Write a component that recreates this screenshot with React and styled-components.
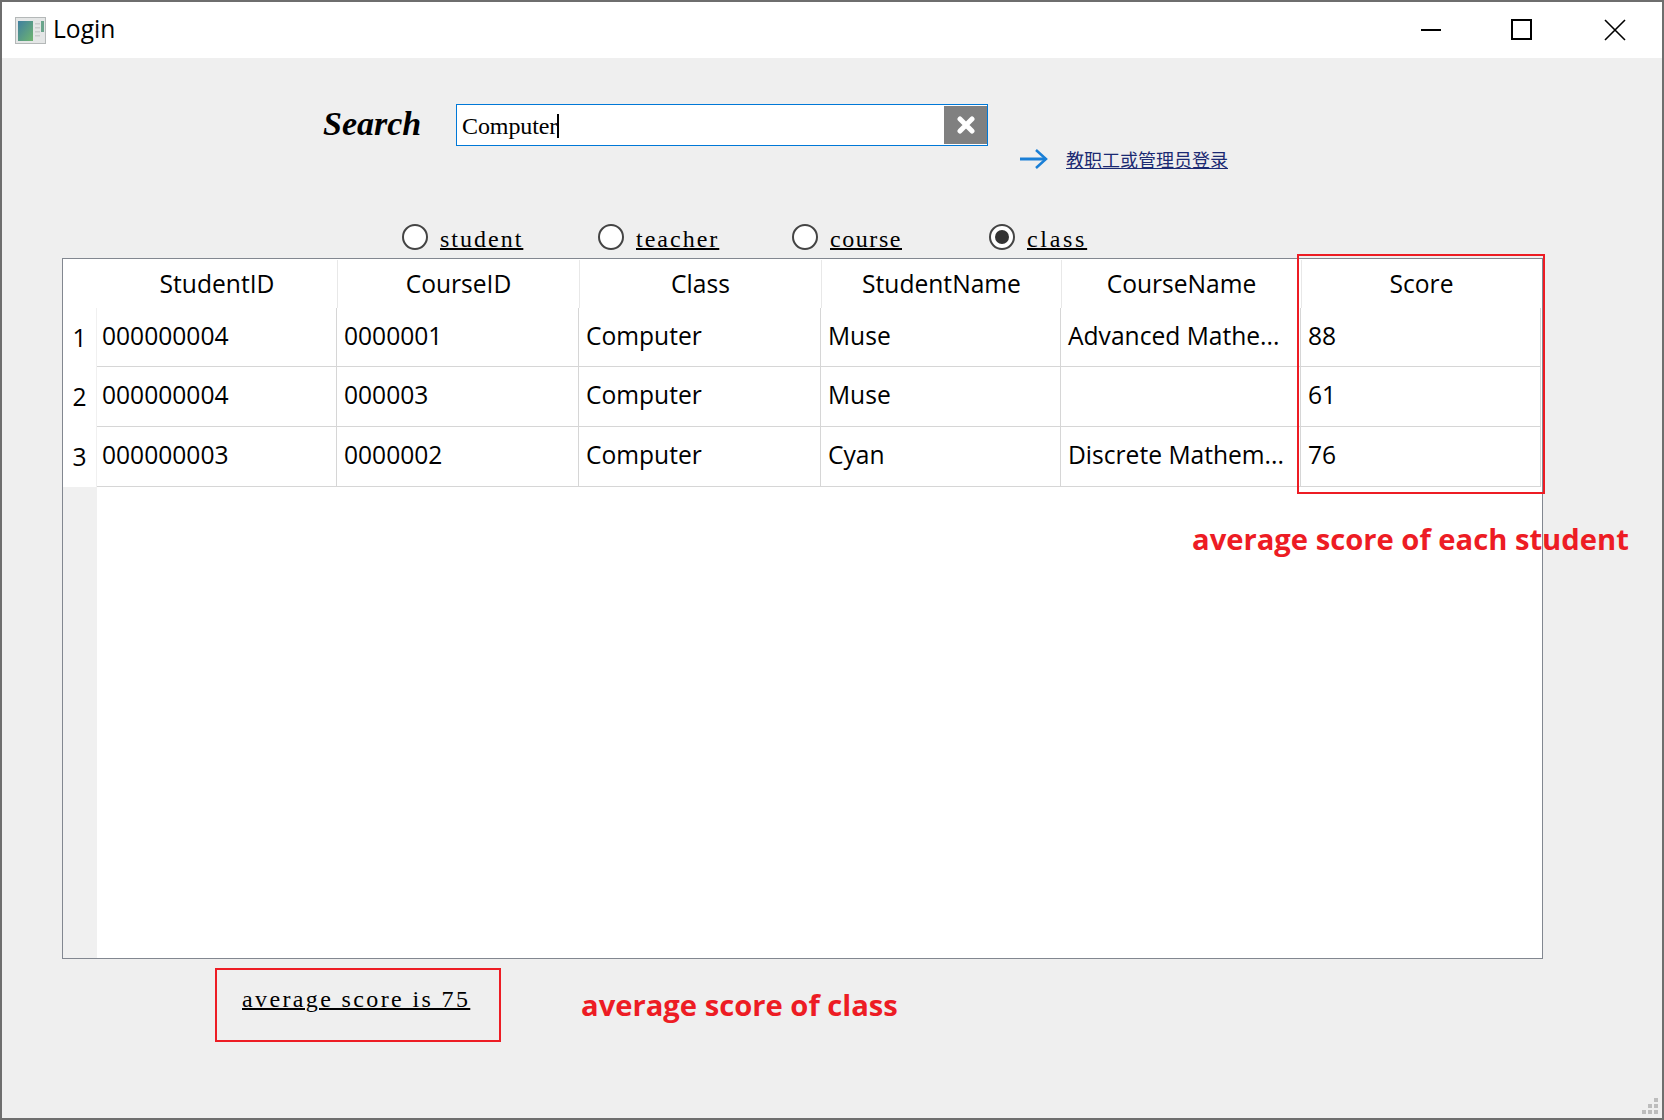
import React from "react"
import styled, { createGlobalStyle } from "styled-components"

const GlobalStyle = createGlobalStyle`
  html, body {
    margin: 0;
    padding: 0;
    background: #efefef;
  }
`

const Window = styled.div`
  position: relative;
  box-sizing: border-box;
  width: 1664px;
  height: 1120px;
  display: flex;
  flex-direction: column;
  overflow: hidden;
  border: 2px solid #6e6e6e;
  background: #efefef;
  font-family: "Open Sans", "Noto Sans", sans-serif;
  color: #000;
`

const TitleBar = styled.div`
  display: flex;
  align-items: center;
  flex: none;
  height: 56px;
  padding-left: 13px;
  background: #fff;
`

const AppIcon = styled.svg`
  width: 31px;
  height: 27px;
  flex: none;
  margin-right: 7px;
`

const Title = styled.span`
  flex: 1;
  padding-bottom: 4px;
  font-size: 24.6px;
`

const WindowButton = styled.svg`
  width: 22px;
  height: 22px;
  flex: none;
  margin-right: ${props => props.$gap}px;
`

const Content = styled.div`
  display: flex;
  flex-direction: column;
  flex: 1;
`

const SearchRow = styled.div`
  display: flex;
  align-items: flex-start;
  height: 166px;
  padding: 46px 0 0 321px;
  box-sizing: border-box;
`

const SearchLabel = styled.div`
  width: 133px;
  height: 40px;
  font-family: "Liberation Serif", serif;
  font-style: italic;
  font-weight: 700;
  font-size: 34px;
  line-height: 40px;
`

const SearchBox = styled.div`
  display: flex;
  box-sizing: border-box;
  width: 532px;
  height: 42px;
  border: 1px solid #0078d7;
  background: #fff;
`

const SearchText = styled.div`
  flex: 1;
  display: flex;
  align-items: center;
  padding: 2px 0 0 5px;
  font-family: "Liberation Serif", serif;
  font-size: 24px;
  letter-spacing: -0.1px;
`

const Caret = styled.span`
  width: 2px;
  height: 24px;
  background: #000;
`

const ClearButton = styled.div`
  display: flex;
  align-items: center;
  justify-content: center;
  align-self: flex-start;
  width: 43px;
  height: 38px;
  margin-top: 1px;
  background: #808080;
`

const StaffLink = styled.a`
  display: flex;
  align-items: center;
  gap: 18px;
  margin: 44px 0 0 32px;
  font-family: "Noto Sans CJK SC", sans-serif;
  font-size: 18px;
  line-height: 22px;
  color: #1b2a72;
  text-decoration: underline;
`

const RadioRow = styled.div`
  display: flex;
  height: 34px;
  padding-left: 400px;
`

const RadioItem = styled.label`
  display: flex;
  align-items: flex-start;
  gap: 12px;
  width: ${props => props.$width}px;
  font-family: "Liberation Serif", serif;
  font-size: 24px;
  line-height: 28px;
`

const RadioCircle = styled.span`
  display: flex;
  align-items: center;
  justify-content: center;
  box-sizing: border-box;
  width: 26px;
  height: 26px;
  border: 2px solid #444;
  border-radius: 50%;
  background: #fff;
`

const RadioDot = styled.span`
  width: 14px;
  height: 14px;
  border-radius: 50%;
  background: #333;
`

const RadioText = styled.span`
  padding-top: 1px;
  letter-spacing: ${props => props.$spacing}px;
  text-decoration: underline;
  text-decoration-thickness: 2px;
`

const Frame = styled.div`
  position: relative;
  box-sizing: border-box;
  display: flex;
  flex-direction: column;
  flex: none;
  width: 1481px;
  height: 701px;
  margin-left: 60px;
  border: 1px solid #828790;
  background: #fff;
`

const HeaderRow = styled.div`
  display: flex;
  flex: none;
  height: 49px;
  padding-left: 34px;
`

const HeaderCell = styled.div`
  box-sizing: border-box;
  width: ${props => props.$width}px;
  margin-top: 1px;
  padding-top: 1px;
  border-right: 1px solid ${props => (props.$last ? "transparent" : "#e8e8e8")};
  text-align: center;
  font-size: 24.6px;
  line-height: 46px;
`

const DataRow = styled.div`
  display: flex;
  flex: none;
  height: ${props => props.$height}px;
`

const RowNumber = styled.div`
  box-sizing: border-box;
  width: 34px;
  padding-bottom: 1px;
  border-right: 1px solid #f0f0f0;
  display: flex;
  align-items: center;
  justify-content: center;
  font-size: 24.6px;
`

const DataCell = styled.div`
  box-sizing: border-box;
  width: ${props => props.$width}px;
  padding: 0 6px 4px ${props => (props.$first ? 5 : 7)}px;
  display: flex;
  align-items: center;
  border-right: 1px solid #d6d6d6;
  border-bottom: 1px solid #d6d6d6;
  font-size: 24.6px;
  white-space: nowrap;
`

const EmptyArea = styled.div`
  display: flex;
  flex: 1;
`

const Gutter = styled.div`
  width: 34px;
  background: #f0f0f0;
`

const Highlight = styled.div`
  position: absolute;
  left: 1234px;
  top: -5px;
  box-sizing: border-box;
  width: 248px;
  height: 240px;
  border: 2px solid #ed1c24;
`

const Note = styled.span`
  font-size: 29.2px;
  font-weight: 700;
  color: #ed1c24;
  white-space: nowrap;
`

const StudentNote = styled(Note)`
  position: absolute;
  left: 1129px;
  top: 260px;
`

const Footer = styled.div`
  display: flex;
  align-items: center;
  gap: 80px;
  margin: 9px 0 0 213px;
`

const AverageBox = styled.div`
  box-sizing: border-box;
  width: 286px;
  height: 74px;
  padding: 15px 0 0 25px;
  border: 2px solid #ed1c24;
  font-family: "Liberation Serif", serif;
  font-size: 24px;
  line-height: 28px;
  letter-spacing: 2.37px;
  text-decoration: underline;
  text-decoration-thickness: 2px;
  white-space: pre;
`

const Grip = styled.svg`
  position: absolute;
  right: 4px;
  bottom: 4px;
  width: 16px;
  height: 16px;
`

const headerCols = [241, 242, 242, 240, 240, 240]
const cellCols = [240, 242, 242, 240, 240, 240]
const headers = ["StudentID", "CourseID", "Class", "StudentName", "CourseName", "Score"]
const rows = [
  ["000000004", "0000001", "Computer", "Muse", "Advanced Mathe...", "88"],
  ["000000004", "000003", "Computer", "Muse", "", "61"],
  ["000000003", "0000002", "Computer", "Cyan", "Discrete Mathem...", "76"],
]
const radios = [
  { label: "student", width: 196, spacing: 2 },
  { label: "teacher", width: 194, spacing: 2 },
  { label: "course", width: 197, spacing: 1.56 },
  { label: "class", width: 120, spacing: 2.7, checked: true },
]

const App = () => (
  <Window>
    <GlobalStyle />
    <TitleBar>
      <AppIcon viewBox="0 0 31 27">
        <defs>
          <linearGradient id="panel" x1="0" y1="0" x2="1" y2="1">
            <stop offset="0" stopColor="#3f7fa0" />
            <stop offset="1" stopColor="#6fb56f" />
          </linearGradient>
        </defs>
        <rect x="0.5" y="0.5" width="30" height="26" fill="#e4e6e6" stroke="#b4b8b8" />
        <rect x="3" y="4" width="15" height="20" fill="url(#panel)" />
        <rect x="20" y="6" width="5" height="1.5" fill="#c9cccc" />
        <rect x="20" y="10" width="5" height="1.5" fill="#c9cccc" />
        <rect x="20" y="14" width="5" height="1.5" fill="#c9cccc" />
        <rect x="20" y="18" width="5" height="1.5" fill="#c9cccc" />
        <rect x="26" y="4" width="3" height="11" fill="#6aa58c" />
      </AppIcon>
      <Title>Login</Title>
      <WindowButton viewBox="0 0 22 22" $gap={69}>
        <path d="M1 11h20" stroke="#000" strokeWidth="2" />
      </WindowButton>
      <WindowButton viewBox="0 0 22 22" $gap={71}>
        <rect x="1" y="1" width="19" height="19" fill="none" stroke="#000" strokeWidth="2" />
      </WindowButton>
      <WindowButton viewBox="0 0 22 22" $gap={36}>
        <path d="M1 1l20 20M21 1L1 21" stroke="#000" strokeWidth="1.6" />
      </WindowButton>
    </TitleBar>
    <Content>
      <SearchRow>
        <SearchLabel>Search</SearchLabel>
        <SearchBox>
          <SearchText>
            Computer
            <Caret />
          </SearchText>
          <ClearButton>
            <svg width="18" height="18" viewBox="0 0 18 18">
              <path d="M3 3l12 12M15 3L3 15" stroke="#fff" strokeWidth="5" strokeLinecap="round" />
            </svg>
          </ClearButton>
        </SearchBox>
        <StaffLink>
          <svg width="28" height="20" viewBox="0 0 28 20">
            <path d="M0 10h26" stroke="#1a7fd6" strokeWidth="3" />
            <path d="M16 1l10 9-10 9" fill="none" stroke="#1a7fd6" strokeWidth="2.5" />
          </svg>
          教职工或管理员登录
        </StaffLink>
      </SearchRow>
      <RadioRow>
        {radios.map(({ label, width, spacing, checked }) => (
          <RadioItem key={label} $width={width}>
            <RadioCircle>{checked && <RadioDot />}</RadioCircle>
            <RadioText $spacing={spacing}>{label}</RadioText>
          </RadioItem>
        ))}
      </RadioRow>
      <Frame>
        <HeaderRow>
          {headers.map((h, i) => (
            <HeaderCell key={h} $width={headerCols[i]} $last={i === 5}>
              {h}
            </HeaderCell>
          ))}
        </HeaderRow>
        {rows.map((row, r) => (
          <DataRow key={r} $height={r === 0 ? 59 : 60}>
            <RowNumber>{r + 1}</RowNumber>
            {row.map((cell, c) => (
              <DataCell key={c} $width={cellCols[c]} $first={c === 0}>
                {cell}
              </DataCell>
            ))}
          </DataRow>
        ))}
        <EmptyArea>
          <Gutter />
        </EmptyArea>
        <Highlight />
        <StudentNote>average score of each student</StudentNote>
      </Frame>
      <Footer>
        <AverageBox>average score is 75</AverageBox>
        <Note>average score of class</Note>
      </Footer>
    </Content>
    <Grip viewBox="0 0 16 16" fill="#bdbdbd">
      <rect x="12" y="0" width="4" height="4" />
      <rect x="6" y="6" width="4" height="4" />
      <rect x="12" y="6" width="4" height="4" />
      <rect x="0" y="12" width="4" height="4" />
      <rect x="6" y="12" width="4" height="4" />
      <rect x="12" y="12" width="4" height="4" />
    </Grip>
  </Window>
)

export default App
